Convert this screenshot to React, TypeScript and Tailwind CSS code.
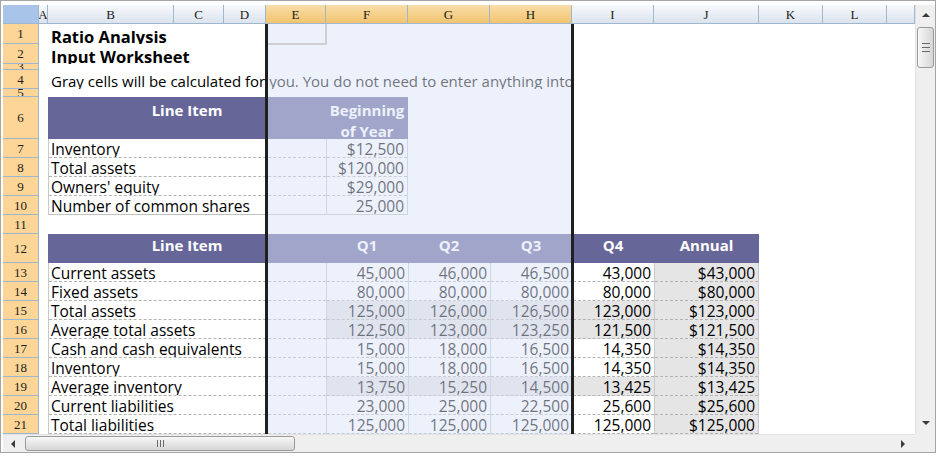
import React from 'react';

type Col = { l: string; w: string; sel: boolean };

const cols: Col[] = [
  { l: 'A', w: 'w-[9px]', sel: false },
  { l: 'B', w: 'w-[126px]', sel: false },
  { l: 'C', w: 'w-[50px]', sel: false },
  { l: 'D', w: 'w-[42px]', sel: false },
  { l: 'E', w: 'w-[60px]', sel: true },
  { l: 'F', w: 'w-[82px]', sel: true },
  { l: 'G', w: 'w-[82px]', sel: true },
  { l: 'H', w: 'w-[82px]', sel: true },
  { l: 'I', w: 'w-[82px]', sel: false },
  { l: 'J', w: 'w-[105px]', sel: false },
  { l: 'K', w: 'w-[64px]', sel: false },
  { l: 'L', w: 'w-[64px]', sel: false },
  { l: '', w: 'w-[28px]', sel: false },
];

const startItems = [
  ['Inventory', '$12,500'],
  ['Total assets', '$120,000'],
  ["Owners' equity", '$29,000'],
  ['Number of common shares', '25,000'],
];

// label, Q1..Q4, annual, calculated (gray) row
const quarterItems: [string, string, string, string, string, string, boolean][] = [
  ['Current assets', '45,000', '46,000', '46,500', '43,000', '$43,000', false],
  ['Fixed assets', '80,000', '80,000', '80,000', '80,000', '$80,000', false],
  ['Total assets', '125,000', '126,000', '126,500', '123,000', '$123,000', true],
  ['Average total assets', '122,500', '123,000', '123,250', '121,500', '$121,500', true],
  ['Cash and cash equivalents', '15,000', '18,000', '16,500', '14,350', '$14,350', false],
  ['Inventory', '15,000', '18,000', '16,500', '14,350', '$14,350', false],
  ['Average inventory', '13,750', '15,250', '14,500', '13,425', '$13,425', true],
  ['Current liabilities', '23,000', '25,000', '22,500', '25,600', '$25,600', false],
  ['Total liabilities', '125,000', '125,000', '125,000', '125,000', '$125,000', false],
];

function RowNum({ n }: { n: number }) {
  return (
    <div className="w-[36px] shrink-0 h-full flex items-center justify-center overflow-hidden border-r border-b border-[#9eb6ce] bg-[#fdd697] font-['Liberation_Serif',serif] text-[13px] leading-none text-[#1c1c1c]">
      {n}
    </div>
  );
}

function Row({ n, h, children }: { n: number; h: string; children?: React.ReactNode }) {
  return (
    <div className={`flex shrink-0 ${h}`}>
      <RowNum n={n} />
      <div className="flex h-full flex-1 min-w-0 overflow-hidden">{children}</div>
    </div>
  );
}

function Cell({
  w,
  children,
  gray = false,
  label = false,
  edge = false,
  solid = false,
}: {
  w: string;
  children?: React.ReactNode;
  gray?: boolean;
  label?: boolean;
  edge?: boolean;
  solid?: boolean;
}) {
  return (
    <div className={`${w} shrink-0 h-full border-l border-[#c9c9c9] ${edge ? 'border-r' : ''} ${gray ? 'bg-[#e5e5e5]' : ''}`}>
      <div
        className={`h-full overflow-hidden whitespace-nowrap border-b ${solid ? 'border-[#c2c2c2]' : 'border-dashed border-[#b3b3b3]'} pt-[1px] text-[15.5px] leading-[19px] text-black ${label ? 'pl-[2px] text-left' : 'pr-[3px] text-right'}`}
      >
        {children}
      </div>
    </div>
  );
}

function HeadCell({ w, children, pad }: { w: string; children: React.ReactNode; pad: string }) {
  return (
    <div className={`${w} shrink-0 h-full bg-[#666699] text-center text-[15px] font-bold leading-[21px] text-white whitespace-nowrap overflow-hidden ${pad}`}>
      {children}
    </div>
  );
}

function Arrow({ dir }: { dir: 'up' | 'down' | 'left' | 'right' }) {
  const pts = {
    up: '0,4 4,0 8,4',
    down: '0,0 8,0 4,4',
    left: '4,0 4,8 0,4',
    right: '0,0 0,8 4,4',
  }[dir];
  const vertical = dir === 'up' || dir === 'down';
  return (
    <svg width={vertical ? 8 : 4} height={vertical ? 4 : 8} viewBox={vertical ? '0 0 8 4' : '0 0 4 8'}>
      <polygon points={pts} fill="#3a3a3a" />
    </svg>
  );
}

function VScroll() {
  return (
    <div className="w-[20px] h-full flex flex-col bg-[#efefef] border-l border-[#e2e2e2]">
      <div className="h-[20px] flex items-center justify-center">
        <Arrow dir="up" />
      </div>
      <div className="mt-[2px] mx-[1px] h-[41px] rounded-[3px] border border-[#9a9a9a] bg-gradient-to-r from-[#f7f7f7] to-[#d6d6d6] flex flex-col items-center justify-center gap-[3px]">
        <div className="w-[8px] h-[1px] bg-[#6a6a6a]" />
        <div className="w-[8px] h-[1px] bg-[#6a6a6a]" />
        <div className="w-[8px] h-[1px] bg-[#6a6a6a]" />
      </div>
      <div className="flex-1" />
      <div className="h-[22px] flex items-center justify-center">
        <Arrow dir="down" />
      </div>
    </div>
  );
}

function HScroll() {
  return (
    <div className="w-[912px] h-full flex bg-[#efefef] border-t border-[#e2e2e2]">
      <div className="w-[20px] flex items-center justify-center">
        <Arrow dir="left" />
      </div>
      <div className="ml-[2px] my-[1px] w-[270px] rounded-[3px] border border-[#9a9a9a] bg-gradient-to-b from-[#f7f7f7] to-[#d6d6d6] flex items-center justify-center gap-[2px]">
        <div className="w-[1px] h-[7px] bg-[#6a6a6a]" />
        <div className="w-[1px] h-[7px] bg-[#6a6a6a]" />
        <div className="w-[1px] h-[7px] bg-[#6a6a6a]" />
      </div>
      <div className="flex-1" />
      <div className="w-[24px] flex items-center justify-center">
        <Arrow dir="right" />
      </div>
    </div>
  );
}

function Sheet() {
  return (
    <div className="relative w-[912px] h-full flex flex-col overflow-hidden font-['Open_Sans',sans-serif] bg-white">
      {/* column headers */}
      <div className="flex h-[19px] shrink-0">
        <div className="w-[36px] shrink-0 h-full bg-[#a9c4e9] border-r border-b border-[#9eb6ce]" />
        {cols.map((c, i) => (
          <div
            key={i}
            className={`${c.w} shrink-0 h-full flex items-center justify-center overflow-hidden border-r border-b border-[#9eb6ce] font-['Liberation_Serif',serif] text-[13px] leading-none text-[#1b1b1b] ${
              c.sel ? 'bg-gradient-to-b from-[#f9dda8] to-[#f2c46f]' : 'bg-gradient-to-b from-[#f7f9fc] to-[#dbe3ee]'
            }`}
          >
            {c.l}
          </div>
        ))}
      </div>

      <Row n={1} h="h-[20px]">
        <div className="pl-[12px] pt-[3px] text-[16.5px] font-bold leading-[20px] whitespace-nowrap text-black">Ratio Analysis</div>
      </Row>
      <Row n={2} h="h-[20px]">
        <div className="pl-[12px] pt-[3px] text-[16.5px] font-bold leading-[20px] whitespace-nowrap text-black">Input Worksheet</div>
      </Row>
      <Row n={3} h="h-[6px]" />
      <Row n={4} h="h-[19px]">
        <div className="ml-[9px] w-[524px] shrink-0 overflow-hidden whitespace-nowrap pl-[3px] pt-[2px] text-[15px] leading-[19px] text-black">
          Gray cells will be calculated for you. You do not need to enter anything into these cells.
        </div>
      </Row>
      <Row n={5} h="h-[8px]" />
      <Row n={6} h="h-[42px]">
        <div className="w-[9px] shrink-0" />
        <HeadCell w="w-[278px]" pad="pt-[3px]">Line Item</HeadCell>
        <HeadCell w="w-[82px]" pad="pt-[3px]">
          Beginning
          <br />
          of Year
        </HeadCell>
      </Row>
      {startItems.map(([label, value], i) => (
        <Row key={label} n={7 + i} h="h-[19px]">
          <div className="w-[9px] shrink-0" />
          <Cell w="w-[278px]" label solid={i === startItems.length - 1}>
            {label}
          </Cell>
          <Cell w="w-[82px]" edge solid={i === startItems.length - 1}>
            {value}
          </Cell>
        </Row>
      ))}
      <Row n={11} h="h-[19px]" />
      <Row n={12} h="h-[29px]">
        <div className="w-[9px] shrink-0" />
        <HeadCell w="w-[278px]" pad="pt-[1px]">Line Item</HeadCell>
        <HeadCell w="w-[82px]" pad="pt-[1px]">Q1</HeadCell>
        <HeadCell w="w-[82px]" pad="pt-[1px]">Q2</HeadCell>
        <HeadCell w="w-[82px]" pad="pt-[1px]">Q3</HeadCell>
        <HeadCell w="w-[82px]" pad="pt-[1px]">Q4</HeadCell>
        <HeadCell w="w-[105px]" pad="pt-[1px]">Annual</HeadCell>
      </Row>
      {quarterItems.map(([label, q1, q2, q3, q4, annual, calc], i) => (
        <Row key={i} n={13 + i} h="h-[19px]">
          <div className="w-[9px] shrink-0" />
          <Cell w="w-[278px]" label>
            {label}
          </Cell>
          <Cell w="w-[82px]" gray={calc}>
            {q1}
          </Cell>
          <Cell w="w-[82px]" gray={calc}>
            {q2}
          </Cell>
          <Cell w="w-[82px]" gray={calc}>
            {q3}
          </Cell>
          <Cell w="w-[82px]" gray={calc}>
            {q4}
          </Cell>
          <Cell w="w-[105px]" gray edge>
            {annual}
          </Cell>
        </Row>
      ))}

      {/* selected columns E:H */}
      <div className="absolute left-[263px] top-[19px] w-[306px] h-[410px] bg-[#dce4fa]/50" />
      <div className="absolute left-[263px] top-[19px] w-[61px] h-[21px] border-r-2 border-b-2 border-[#cfcfcf]" />
      <div className="absolute left-[262px] top-[19px] w-[3px] h-[410px] bg-[#1f1f1f]" />
      <div className="absolute left-[568px] top-[19px] w-[3px] h-[410px] bg-[#1f1f1f]" />
    </div>
  );
}

export default function App() {
  return (
    <div className="w-[938px] h-[457px] bg-white">
      <div className="w-[936px] h-[453px] border border-[#a5a5a5] pt-[4px] pl-[2px] flex flex-col">
        <div className="flex h-[429px] shrink-0">
          <Sheet />
          <VScroll />
        </div>
        <div className="flex h-[18px] shrink-0">
          <HScroll />
          <div className="w-[20px] h-full bg-[#efefef]" />
        </div>
      </div>
    </div>
  );
}
